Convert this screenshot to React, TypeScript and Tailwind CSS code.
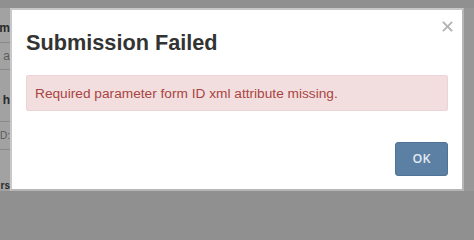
import React from "react";

export default function App() {
  const font = { fontFamily: '"Liberation Sans", Arial, sans-serif' };
  return (
    <div className="w-[474px] min-h-screen bg-[#909090]" style={font}>
      <div className="w-[474px] h-[201px] flex flex-col overflow-hidden">
        <div className="h-[8px] shrink-0" />
        <div className="flex flex-row">
          <div className="w-[10px] h-[183px] bg-[#a2a2a2] flex flex-col text-[12px] text-[#2a2a2a] leading-none">
            <div className="h-[35px] w-full flex justify-end items-center pt-[5px] font-bold border-b border-[#8a8a8a]">m</div>
            <div className="h-[27px] w-full flex justify-end items-center text-[#5a5a5a] border-b border-[#8a8a8a]">a</div>
            <div className="h-[52px] w-full flex justify-end items-center pt-[8px] font-bold border-b border-[#8a8a8a]">h</div>
            <div className="h-[28px] w-full flex justify-end items-center text-[#5a5a5a] text-[10px] border-b border-[#8a8a8a]">D:</div>
            <div className="h-[41px] w-full flex justify-end items-end font-bold text-[10px]">rs</div>
          </div>
          <div className="relative w-[454px] h-[183px] bg-white border-2 border-[#c8c8c8] border-r-[#b6b6b6] border-b-[#b6b6b6] px-[14px] pt-[21px] flex flex-col">
            <button className="absolute top-[11px] right-[9px] w-[11px] h-[11px] flex items-center justify-center">
              <svg width="11" height="11" viewBox="0 0 11 11">
                <path d="M1.5 1.5 L9.5 9.5 M9.5 1.5 L1.5 9.5" stroke="#b4b4b4" strokeWidth="1.8" strokeLinecap="square" />
              </svg>
            </button>
            <h4 className="text-[21.7px] leading-[24px] font-bold text-[#333333] m-0">Submission Failed</h4>
            <div className="mt-[20px] h-[36px] bg-[#f2dede] border border-[#eed3d7] rounded-[2px] px-[8px] pt-[8px] text-[13.7px] leading-[20px] text-[#a94442]">
              Required parameter form ID xml attribute missing.
            </div>
            <div className="mt-[31px] flex justify-end">
              <button
                className="w-[53px] h-[34px] rounded-[3px] bg-[#5b80a3] border border-[#4f7396] text-[#e3ebf3] text-[12.5px] font-semibold flex items-center justify-center"
                style={{ fontFamily: '"Open Sans", "Liberation Sans", sans-serif' }}
              >
                OK
              </button>
            </div>
          </div>
          <div className="w-[10px] h-[183px] bg-[#979797]" />
        </div>
      </div>
    </div>
  );
}
